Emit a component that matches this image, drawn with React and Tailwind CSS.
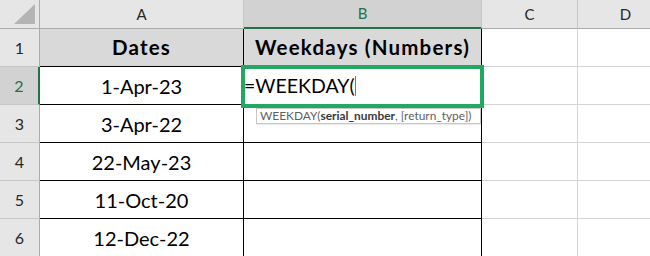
const FONT = { fontFamily: 'Lato, "Open Sans", sans-serif' };

const dates = ['1-Apr-23', '3-Apr-22', '22-May-23', '11-Oct-20', '12-Dec-22'];

function ColHeader({ label, active }) {
  return (
    <div
      className={`flex items-center justify-center text-[15px] ${
        active
          ? 'bg-[#d2d2d2] text-[#217346] border-b-2 border-b-[#217346] border-r border-r-[#c6c6c6]'
          : 'bg-[#e6e6e6] text-[#262626] border-b border-b-[#ababab] border-r border-r-[#c6c6c6]'
      }`}
    >
      {label}
    </div>
  );
}

function RowHeader({ n, active }) {
  return (
    <div
      className={`flex items-center justify-center text-[16px] ${
        active
          ? 'bg-[#d2d2d2] text-[#217346] border-r-2 border-r-[#217346] border-b border-b-[#c6c6c6]'
          : 'bg-[#e6e6e6] text-[#262626] border-r border-r-[#ababab] border-b border-b-[#c6c6c6]'
      }`}
    >
      {n}
    </div>
  );
}

export default function App() {
  return (
    <div className="relative w-[650px] h-[256px] overflow-hidden bg-white" style={FONT}>
      <div className="grid grid-cols-[40px_204px_238px_96px_96px] grid-rows-[29px_repeat(6,38px)]">
        {/* corner */}
        <div className="bg-[#e6e6e6] border-b border-b-[#ababab] border-r border-r-[#ababab] flex items-end justify-end pr-[4px] pb-[4px]">
          <svg width="21" height="20" viewBox="0 0 21 20">
            <polygon points="21,0 21,20 0,20" fill="#b4b4b4" />
          </svg>
        </div>
        <ColHeader label="A" />
        <ColHeader label="B" active />
        <ColHeader label="C" />
        <ColHeader label="D" />

        {/* row 1 */}
        <RowHeader n={1} />
        <div className="bg-[#d9d9d9] border-r border-b border-black flex items-center justify-center text-[20.5px] tracking-[1.2px] font-bold text-black">
          Dates
        </div>
        <div className="bg-[#d9d9d9] border-r border-b border-black flex items-center justify-center text-[20.5px] tracking-[1.2px] font-bold text-black">
          Weekdays (Numbers)
        </div>
        <div className="border-r border-b border-[#d4d4d4]" />
        <div className="border-r border-b border-[#d4d4d4]" />

        {dates.map((d, i) => (
          <div key={d} className="contents">
            <RowHeader n={i + 2} active={i === 0} />
            <div className="border-r border-b border-black flex items-center justify-center text-[20px] text-black">
              {d}
            </div>
            <div className="border-r border-b border-black flex items-center text-[19.5px] text-black">
              {i === 0 && (
                <span className="flex items-center">
                  =WEEKDAY(
                  <span className="inline-block w-px h-[20px] bg-[#7a7a7a]" />
                </span>
              )}
            </div>
            <div className="border-r border-b border-[#d4d4d4]" />
            <div className="border-r border-b border-[#d4d4d4]" />
          </div>
        ))}
      </div>

      {/* active cell selection */}
      <div className="absolute left-[241px] top-[65px] w-[243px] h-[43px] border-4 border-[#22a860] pointer-events-none" />

      {/* function tooltip */}
      <div className="absolute left-[256px] top-[108px] w-[225px] h-[16px] bg-white border border-[#c6c6c6] flex items-center pl-[3px] text-[11.9px] leading-none text-[#5f5f5f] whitespace-nowrap shadow-[1px_1px_1px_rgba(0,0,0,0.08)]">
        WEEKDAY(<span className="font-bold text-[#3a3a3a]">serial_number</span>, [return_type])
      </div>
    </div>
  );
}
